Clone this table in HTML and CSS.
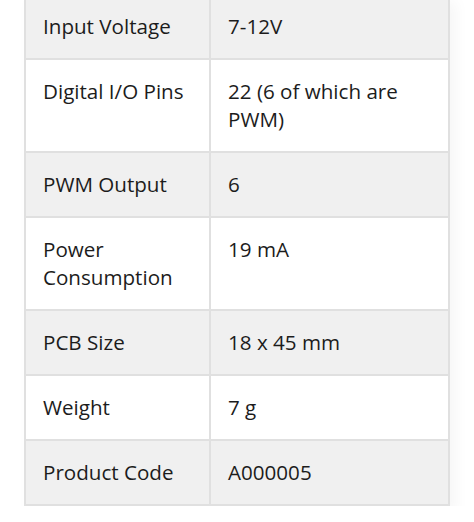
FILE: index.html
```html
<!DOCTYPE html>
<html>
<head>
<meta charset="utf-8">
<link rel="stylesheet" href="styles.css">
</head>
<body>
<div class="page">
  <table class="specs">
    <tbody>
      <tr><td class="label">Input Voltage</td><td class="value">7-12V</td></tr>
      <tr><td class="label">Digital I/O Pins</td><td class="value">22 (6 of which are PWM)</td></tr>
      <tr><td class="label">PWM Output</td><td class="value">6</td></tr>
      <tr><td class="label">Power Consumption</td><td class="value">19 mA</td></tr>
      <tr><td class="label">PCB Size</td><td class="value">18 x 45 mm</td></tr>
      <tr><td class="label">Weight</td><td class="value">7 g</td></tr>
      <tr><td class="label">Product Code</td><td class="value">A000005</td></tr>
    </tbody>
  </table>
</div>
</body>
</html>
```

FILE: styles.css
```css
html, body {
  margin: 0;
  padding: 0;
  background: #ffffff;
}
.page {
  padding: 0 0 0 24px;
  margin-top: -7px;
  font-family: "Open Sans", "DejaVu Sans", sans-serif;
  color: #1c1c1c;
}
.specs {
  border-collapse: collapse;
  width: 426px;
  table-layout: fixed;
  box-shadow: 6px 8px 14px rgba(0, 0, 0, 0.04);
}
.specs td {
  border: 2px solid #e0e0e0;
  padding: 16.5px 16px 18.5px 17px;
  font-size: 20.6px;
  line-height: 28px;
  vertical-align: top;
  text-align: left;
}
.specs td.label {
  width: 150px;
}
.specs tr:nth-child(odd) td {
  background: #f0f0f0;
}
.specs tr:nth-child(even) td {
  background: #ffffff;
}
```
